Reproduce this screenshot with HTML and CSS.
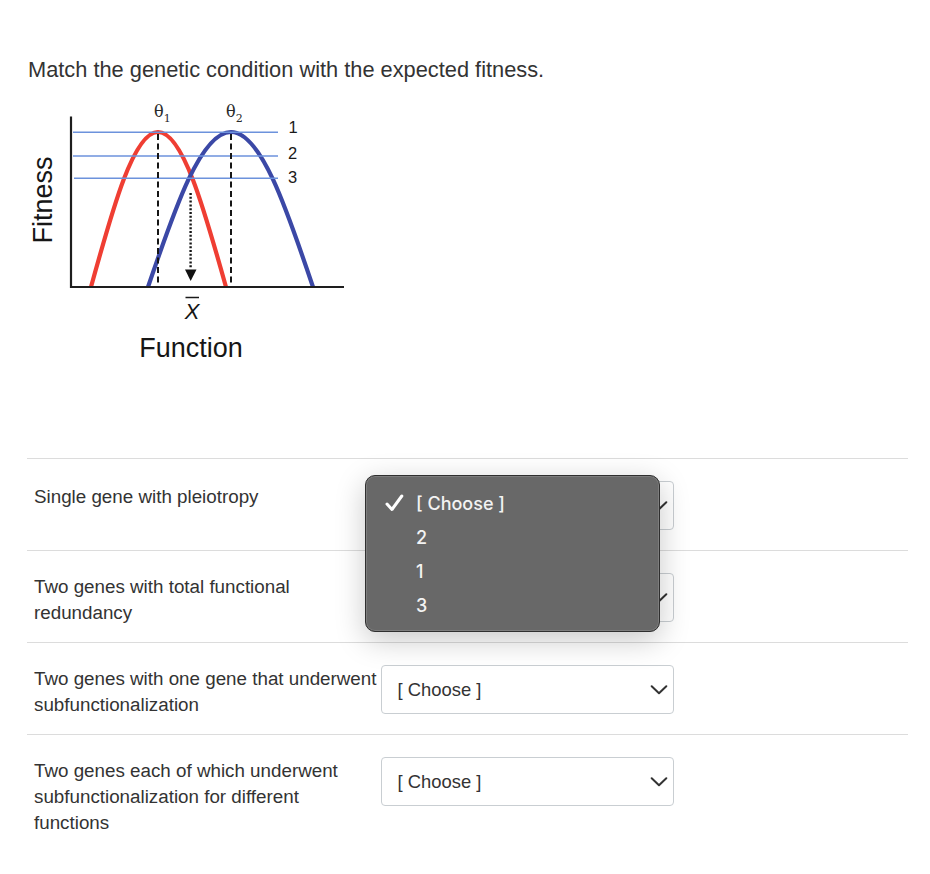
FILE: index.html
```html
<!DOCTYPE html>
<html lang="en">
<head>
<meta charset="utf-8">
<title>Match the genetic condition</title>
<link rel="stylesheet" href="styles.css">
</head>
<body>
<main class="quiz">
  <h1 class="prompt">Match the genetic condition with the expected fitness.</h1>

  <svg class="figure" width="330" height="275" viewBox="28 95 330 275" xmlns="http://www.w3.org/2000/svg">
    <path class="curve curve-red" d="M91,287 C112.85,207.6 133.75,132 158,132 C182.6,132 203.8,207.6 226,287"/>
    <path class="curve curve-blue" d="M148,287 C175.1,207.6 200.96,132 231,132 C260.68,132 286.26,207.6 313,287"/>
    <line class="level" x1="73" y1="132.3" x2="278" y2="132.3"/>
    <line class="level" x1="73" y1="156" x2="278" y2="156"/>
    <line class="level" x1="74" y1="178.3" x2="278" y2="178.3"/>
    <line class="dash" x1="158" y1="134" x2="158" y2="287"/>
    <line class="dash" x1="231" y1="134" x2="231" y2="287"/>
    <line class="dots" x1="190.6" y1="193" x2="190.6" y2="269"/>
    <polygon class="arrowhead" points="185,269.5 196.5,269.5 190.7,281"/>
    <path class="axes" d="M71,116.5 V287 H344"/>
    <text class="theta" x="154" y="116.5">θ<tspan class="sub" dy="5">1</tspan></text>
    <text class="theta" x="226" y="116.5">θ<tspan class="sub" dy="5">2</tspan></text>
    <text class="num" x="288.5" y="133.3">1</text>
    <text class="num" x="288" y="159.3">2</text>
    <text class="num" x="288" y="183.3">3</text>
    <text class="axis-title" x="52" y="200" transform="rotate(-90 52 200)">Fitness</text>
    <line class="bar" x1="185.5" y1="297.5" x2="199" y2="297.5"/>
    <text class="xbar" x="192" y="319">X</text>
    <text class="axis-title" x="191" y="356.5">Function</text>
  </svg>

  <div class="rows">
    <div class="row row-first">
      <div class="label label-single">Single gene with pleiotropy</div>
      <div class="select-wrap">
        <div class="select">
          <span>[ Choose ]</span>
          <svg class="chev" width="18" height="10" viewBox="0 0 18 10"><path d="M1.7 1.3 L9 8.3 L16.3 1.3"/></svg>
        </div>
        <div class="menu">
          <div class="menu-item">
            <span class="check"><svg width="19" height="18" viewBox="0 0 19 18"><path d="M2 10 L7 15.5 L16.8 2"/></svg></span>
            <span>[ Choose ]</span>
          </div>
          <div class="menu-item"><span class="check"></span><span>2</span></div>
          <div class="menu-item"><span class="check"></span><span>1</span></div>
          <div class="menu-item"><span class="check"></span><span>3</span></div>
        </div>
      </div>
    </div>

    <div class="row">
      <div class="label">Two genes with total functional redundancy</div>
      <div class="select-wrap">
        <div class="select">
          <span>[ Choose ]</span>
          <svg class="chev" width="18" height="10" viewBox="0 0 18 10"><path d="M1.7 1.3 L9 8.3 L16.3 1.3"/></svg>
        </div>
      </div>
    </div>

    <div class="row">
      <div class="label">Two genes with one gene that underwent subfunctionalization</div>
      <div class="select-wrap">
        <div class="select">
          <span>[ Choose ]</span>
          <svg class="chev" width="18" height="10" viewBox="0 0 18 10"><path d="M1.7 1.3 L9 8.3 L16.3 1.3"/></svg>
        </div>
      </div>
    </div>

    <div class="row row-last">
      <div class="label">Two genes each of which underwent subfunctionalization for different functions</div>
      <div class="select-wrap">
        <div class="select">
          <span>[ Choose ]</span>
          <svg class="chev" width="18" height="10" viewBox="0 0 18 10"><path d="M1.7 1.3 L9 8.3 L16.3 1.3"/></svg>
        </div>
      </div>
    </div>
  </div>
</main>
</body>
</html>
```

FILE: styles.css
```css
html, body {
  margin: 0;
  padding: 0;
  background: #ffffff;
}

body {
  font-family: "Liberation Sans", Arial, Helvetica, sans-serif;
  color: #333333;
}

.quiz {
  padding: 0 22px 0 27px;
}

.prompt {
  margin: 58px 0 0 1px;
  font-size: 21.8px;
  font-weight: normal;
  line-height: 24px;
  color: #333333;
}

/* ---------- figure ---------- */
.figure {
  display: block;
  margin: 13px 0 0 1px;
  overflow: visible;
}

.curve {
  fill: none;
  stroke-width: 4.2;
  stroke-linecap: butt;
}

.curve-red {
  stroke: #ef3e33;
}

.curve-blue {
  stroke: #3b48a6;
}

.level {
  stroke: #6c92dc;
  stroke-width: 1.5;
}

.dash {
  stroke: #161616;
  stroke-width: 2;
  stroke-dasharray: 6 3.5;
}

.dots {
  stroke: #161616;
  stroke-width: 2.4;
  stroke-dasharray: 2 1.8;
}

.arrowhead {
  fill: #111111;
}

.axes {
  fill: none;
  stroke: #1e1e1e;
  stroke-width: 2.2;
}

.bar {
  stroke: #1a1a1a;
  stroke-width: 1.5;
}

.theta {
  font-family: "DejaVu Serif", "Liberation Serif", serif;
  font-size: 16px;
  fill: #2a2a2a;
}

.sub {
  font-size: 11px;
}

.num {
  font-family: "Liberation Sans", Arial, sans-serif;
  font-size: 16.5px;
  fill: #1a1a1a;
}

.axis-title {
  font-family: "Liberation Sans", Arial, sans-serif;
  font-size: 27px;
  fill: #161616;
  text-anchor: middle;
}

.xbar {
  font-family: "Liberation Sans", Arial, sans-serif;
  font-size: 22px;
  font-style: italic;
  fill: #161616;
  text-anchor: middle;
}

/* ---------- rows ---------- */
.rows {
  margin-top: 88px;
}

.row {
  display: flex;
  align-items: flex-start;
  border-top: 1px solid #dcdcdc;
  padding: 21px 0 16px 7px;
}

.row-first {
  position: relative;
  z-index: 5;
}

.row-last {
  padding-bottom: 30px;
}

.label {
  box-sizing: border-box;
  flex: 0 0 347px;
  padding: 1.5px 3.4px 0 0;
  font-size: 18.8px;
  line-height: 26.3px;
  color: #333333;
}

.label-single {
  padding-top: 4px;
}

.select-wrap {
  position: relative;
  margin: 1px 0 4px;
}

.select {
  box-sizing: border-box;
  width: 293px;
  height: 49px;
  border: 1px solid #c9ced2;
  border-radius: 4px;
  background: #ffffff;
  display: flex;
  align-items: center;
  justify-content: space-between;
  padding: 0 5.5px 0 15.5px;
  font-size: 18.4px;
  color: #333333;
}

.chev {
  display: block;
}

.chev path {
  fill: none;
  stroke: #333333;
  stroke-width: 2;
  stroke-linecap: round;
  stroke-linejoin: round;
}

/* ---------- open dropdown menu ---------- */
.menu {
  position: absolute;
  z-index: 10;
  left: -16px;
  top: -6px;
  box-sizing: border-box;
  width: 295px;
  height: 157px;
  padding: 10px 0;
  background: #686868;
  border: 1px solid #2f2f2f;
  border-radius: 10px;
  box-shadow: inset 0 0 0 1px rgba(255, 255, 255, 0.14), 0 8px 30px rgba(0, 0, 0, 0.22);
  font-family: Inter, "Open Sans", "Liberation Sans", sans-serif;
  font-weight: 500;
  font-size: 18px;
  color: #f3f3f3;
}

.menu-item {
  height: 34px;
  display: flex;
  align-items: center;
  padding-left: 19px;
}

.check {
  flex: 0 0 31px;
  display: flex;
  align-items: center;
}

.check svg {
  display: block;
}

.check path {
  fill: none;
  stroke: #ffffff;
  stroke-width: 3;
  stroke-linecap: round;
  stroke-linejoin: round;
}
```
